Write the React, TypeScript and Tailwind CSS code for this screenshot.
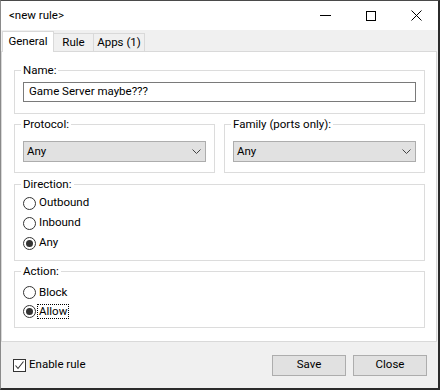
import React from "react";

const Radio: React.FC<{ label: string; checked?: boolean; focused?: boolean; h: string }> = ({
  label,
  checked,
  focused,
  h,
}) => (
  <div className={`flex items-center gap-[3px] ${h}`}>
    <span className="w-[13px] h-[13px] rounded-full border border-[#333333] bg-white flex items-center justify-center shrink-0">
      {checked && <span className="w-[7px] h-[7px] rounded-full bg-[#333333]" />}
    </span>
    {focused ? (
      <span className="border border-dotted border-black leading-[13px] px-[1px] -ml-[2px]">{label}</span>
    ) : (
      <span>{label}</span>
    )}
  </div>
);

const Chevron = () => (
  <svg width="9" height="5" viewBox="0 0 9 5" className="shrink-0">
    <path d="M0.5 0.5 L4.5 4.5 L8.5 0.5" fill="none" stroke="#444" strokeWidth="1" />
  </svg>
);

const Combo: React.FC<{ value: string }> = ({ value }) => (
  <div className="mt-[9px] h-[21px] border border-[#adadad] bg-[#e1e1e1] flex items-center justify-between pl-[3px] pr-[4px]">
    <span>{value}</span>
    <Chevron />
  </div>
);

const Legend: React.FC<{ text: string }> = ({ text }) => (
  <legend className="px-[2px] -ml-[2px] leading-4">{text}</legend>
);

export default function App() {
  return (
    <div className="w-[440px] h-[390px] flex flex-col bg-[#f0f0f0] border-t border-t-[#4a4a4a] border-l border-l-[#8a8a8a] border-r-2 border-r-[#2b2b2b] border-b-2 border-b-[#2b2b2b] text-[11.5px] text-black font-['Roboto',sans-serif] overflow-hidden">
      {/* title bar */}
      <div className="h-[29px] bg-white flex items-center shrink-0">
        <span className="pl-2">&lt;new rule&gt;</span>
        <div className="ml-auto flex items-center gap-[35px] pr-[16px]">
          <svg width="11" height="11" viewBox="0 0 11 11">
            <path d="M0 5.5 H11" stroke="#000" strokeWidth="1" />
          </svg>
          <svg width="10" height="10" viewBox="0 0 10 10">
            <rect x="0.5" y="0.5" width="9" height="9" fill="none" stroke="#000" strokeWidth="1" />
          </svg>
          <svg width="11" height="11" viewBox="0 0 11 11">
            <path d="M0.5 0.5 L10.5 10.5 M10.5 0.5 L0.5 10.5" stroke="#000" strokeWidth="1" />
          </svg>
        </div>
      </div>

      {/* tabs */}
      <div className="h-[21px] flex items-end pl-[1px] shrink-0">
        <div className="relative z-10 h-[21px] w-[52px] -mb-[1px] bg-white border-t border-l border-r border-[#d9d9d9] flex items-center justify-center pb-[1px]">
          General
        </div>
        <div className="h-[18px] w-[40px] border-t border-r border-[#d9d9d9] flex items-center justify-center">
          Rule
        </div>
        <div className="h-[18px] w-[51px] border-t border-r border-[#d9d9d9] flex items-center justify-center">
          Apps (1)
        </div>
      </div>

      {/* panel */}
      <div className="w-[436px] h-[291px] shrink-0 bg-white border border-[#d9d9d9] pl-3 pr-[11px] pt-[10px] flex flex-col">
        <fieldset className="border border-[#dcdcdc] px-2 pb-[11px]">
          <Legend text="Name:" />
          <div className="mt-[4px] h-[20px] border border-[#7a7a7a] bg-white flex items-center pl-[5px]">
            Game Server maybe???
          </div>
        </fieldset>

        <div className="mt-[2px] grid grid-cols-2 gap-[9px]">
          <fieldset className="border border-[#dcdcdc] px-2 pb-[10px]">
            <Legend text="Protocol:" />
            <Combo value="Any" />
          </fieldset>
          <fieldset className="border border-[#dcdcdc] px-2 pb-[10px]">
            <Legend text="Family (ports only):" />
            <Combo value="Any" />
          </fieldset>
        </div>

        <fieldset className="mt-[3px] border border-[#dcdcdc] px-2 pb-[7px]">
          <Legend text="Direction:" />
          <div className="mt-[1px] flex flex-col">
            <Radio label="Outbound" h="h-5" />
            <Radio label="Inbound" h="h-5" />
            <Radio label="Any" checked h="h-5" />
          </div>
        </fieldset>

        <fieldset className="mt-[2px] border border-[#dcdcdc] px-2 pb-[6px]">
          <Legend text="Action:" />
          <div className="mt-[4px] flex flex-col">
            <Radio label="Block" h="h-[19px]" />
            <Radio label="Allow" checked focused h="h-[19px]" />
          </div>
        </fieldset>
      </div>

      {/* bottom bar */}
      <div className="flex-1 flex items-center pl-3 pr-[11px]">
        <div className="flex items-center gap-[3px]">
          <span className="w-[13px] h-[13px] border border-[#333333] bg-white flex items-center justify-center">
            <svg width="11" height="11" viewBox="0 0 11 11">
              <path d="M1.5 5.5 L4 8.5 L9.5 1.5" fill="none" stroke="#333" strokeWidth="1.1" />
            </svg>
          </span>
          <span>Enable rule</span>
        </div>
        <div className="ml-auto flex gap-[7px]">
          <div className="w-[74px] h-[21px] border border-[#adadad] bg-[#e1e1e1] flex items-center justify-center">
            Save
          </div>
          <div className="w-[74px] h-[21px] border border-[#adadad] bg-[#e1e1e1] flex items-center justify-center">
            Close
          </div>
        </div>
      </div>
    </div>
  );
}
